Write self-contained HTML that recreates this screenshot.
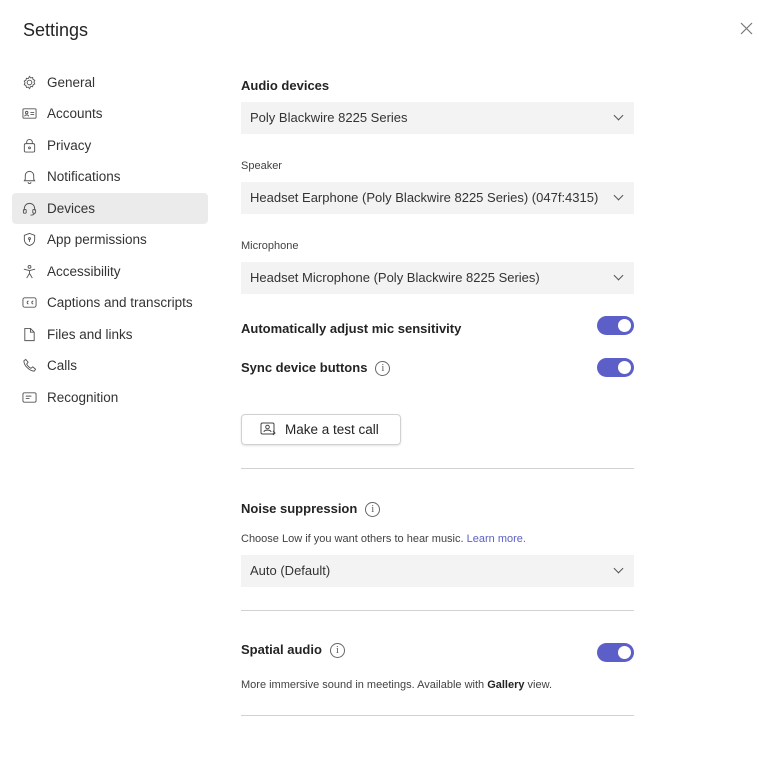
<!DOCTYPE html>
<html><head><style>
*{margin:0;padding:0;box-sizing:border-box}
body{width:759px;height:770px;background:#fff;font-family:"Liberation Sans",sans-serif;color:#242424;position:relative;overflow:hidden}
.a{position:absolute}
.nav{position:absolute;left:12px;width:196px;height:31px;font-size:13.5px;line-height:31px;padding-left:35px;color:#333}
.nav svg{position:absolute;left:10px;top:8px}
.sel{background:#ebebeb;border-radius:4px}
.h{position:absolute;left:241px;font-size:13px;font-weight:bold;color:#242424}
.lbl{position:absolute;left:241px;font-size:11px;color:#424242}
.dd{position:absolute;left:241px;width:393px;height:32px;background:#f3f3f3;font-size:13px;line-height:32px;padding-left:9px;color:#333}
.dd:after{content:"";position:absolute;right:12px;top:10px;width:6px;height:6px;border-right:1.3px solid #555;border-bottom:1.3px solid #555;transform:rotate(45deg)}
.tg{position:absolute;left:597px;width:37px;height:19px;border-radius:10px;background:#5b5fc7}
.tg:after{content:"";position:absolute;right:3px;top:3px;width:13px;height:13px;border-radius:50%;background:#fff}
.hr{position:absolute;left:241px;width:393px;height:1px;background:#d1d1d1}
.i{display:inline-block;width:15px;height:15px;border:1px solid #666;border-radius:50%;font-size:10px;line-height:13px;text-align:center;font-weight:normal;color:#555;vertical-align:middle;margin-left:8px;font-family:"Liberation Serif",serif}
</style></head><body>
<div class="a" style="left:23px;top:20px;font-size:18px;color:#242424">Settings</div>
<svg class="a" style="left:740px;top:22px" width="13" height="13" viewBox="0 0 13 13" stroke="#777" stroke-width="1.2"><path d="M1 1l11 11M12 1L1 12"/></svg>

<div class="nav" style="top:67px"><svg width="15" height="15" viewBox="0 0 16 16" fill="none" stroke="#555"><circle cx="8" cy="8" r="2.5"/><path d="M8 1.5l1.3 1.6 2-.4.5 2 1.8 1-.8 1.9.8 1.9-1.8 1-.5 2-2-.4L8 14.5l-1.3-1.6-2 .4-.5-2-1.8-1 .8-1.9-.8-1.9 1.8-1 .5-2 2 .4z"/></svg>General</div>
<div class="nav" style="top:98px"><svg width="15" height="15" viewBox="0 0 16 16" fill="none" stroke="#555"><rect x="1" y="3" width="14" height="10" rx="1"/><circle cx="5" cy="7" r="1.3"/><path d="M3 11c0-2 4-2 4 0M9 7h4M9 9h4"/></svg>Accounts</div>
<div class="nav" style="top:130px"><svg width="15" height="15" viewBox="0 0 16 16" fill="none" stroke="#555"><rect x="2.5" y="6" width="11" height="9" rx="1.5"/><path d="M5 6V4.5a3 3 0 016 0V6"/><circle cx="8" cy="10.5" r="1"/></svg>Privacy</div>
<div class="nav" style="top:161px"><svg width="15" height="15" viewBox="0 0 16 16" fill="none" stroke="#555"><path d="M3.5 11V7a4.5 4.5 0 019 0v4l1 1.5h-11zM6.5 14a1.5 1.5 0 003 0"/></svg>Notifications</div>
<div class="nav sel" style="top:193px"><svg width="15" height="15" viewBox="0 0 16 16" fill="none" stroke="#555"><path d="M2.5 10V8a5.5 5.5 0 0111 0v2"/><rect x="1.5" y="9" width="3" height="4" rx="1"/><rect x="11.5" y="9" width="3" height="4" rx="1"/><path d="M13 13c0 1.5-2 2-4 2"/></svg>Devices</div>
<div class="nav" style="top:224px"><svg width="15" height="15" viewBox="0 0 16 16" fill="none" stroke="#555"><path d="M8 1.5l5.5 2V8c0 3.5-2.5 5.5-5.5 6.5C5 13.5 2.5 11.5 2.5 8V3.5z"/><circle cx="8" cy="7" r="1"/><path d="M8 8v2.5"/></svg>App permissions</div>
<div class="nav" style="top:256px"><svg width="15" height="15" viewBox="0 0 16 16" fill="none" stroke="#555"><circle cx="8" cy="3" r="1.5"/><path d="M2 5.5l6 1.5 6-1.5M8 7v3l-3 5M8 10l3 5"/></svg>Accessibility</div>
<div class="nav" style="top:287px"><svg width="15" height="15" viewBox="0 0 16 16" fill="none" stroke="#555"><rect x="1" y="3" width="14" height="10" rx="2"/><path d="M7 6.5a1.5 1.5 0 100 3M12 6.5a1.5 1.5 0 100 3"/></svg>Captions and transcripts</div>
<div class="nav" style="top:319px"><svg width="15" height="15" viewBox="0 0 16 16" fill="none" stroke="#555"><path d="M3 1.5h6l4 4v9H3zM9 1.5v4h4"/></svg>Files and links</div>
<div class="nav" style="top:350px"><svg width="15" height="15" viewBox="0 0 16 16" fill="none" stroke="#555"><path d="M4 1.5l2.5 3-1.5 2c1 2 2.5 3.5 4.5 4.5l2-1.5 3 2.5-1.5 2c-5 0-11-6-11-11z"/></svg>Calls</div>
<div class="nav" style="top:382px"><svg width="15" height="15" viewBox="0 0 16 16" fill="none" stroke="#555"><rect x="1" y="3" width="14" height="10" rx="1.5"/><path d="M4 6.5h6M4 9h4"/></svg>Recognition</div>

<div class="h" style="top:78px">Audio devices</div>
<div class="dd" style="top:102px">Poly Blackwire 8225 Series</div>
<div class="lbl" style="top:160px">Speaker</div>
<div class="dd" style="top:182px">Headset Earphone (Poly Blackwire 8225 Series) (047f:4315)</div>
<div class="lbl" style="top:240px">Microphone</div>
<div class="dd" style="top:262px">Headset Microphone (Poly Blackwire 8225 Series)</div>
<div class="h" style="top:321px">Automatically adjust mic sensitivity</div>
<div class="tg" style="top:316px"></div>
<div class="h" style="top:360px">Sync device buttons<span class="i">i</span></div>
<div class="tg" style="top:358px"></div>
<div class="a" style="left:241px;top:414px;width:160px;height:31px;border:1px solid #d1d1d1;border-radius:4px;box-shadow:0 1px 2px rgba(0,0,0,.12);font-size:13.5px;line-height:29px;padding-left:43px;color:#242424">
<svg class="a" style="left:18px;top:7px" width="17" height="15" viewBox="0 0 17 15" fill="none" stroke="#444"><rect x="1" y="1" width="13" height="11" rx="1.5"/><circle cx="7.5" cy="5" r="1.8"/><path d="M4 10c0-2.5 7-2.5 7 0M13 9l2 2-2 2"/></svg>Make a test call</div>
<div class="hr" style="top:468px"></div>
<div class="h" style="top:501px">Noise suppression<span class="i">i</span></div>
<div class="lbl" style="top:533px">Choose Low if you want others to hear music. <span style="color:#5b5fc7">Learn more.</span></div>
<div class="dd" style="top:555px">Auto (Default)</div>
<div class="hr" style="top:610px"></div>
<div class="h" style="top:642px">Spatial audio<span class="i">i</span></div>
<div class="tg" style="top:643px"></div>
<div class="lbl" style="top:679px">More immersive sound in meetings. Available with <b style="color:#242424">Gallery</b> view.</div>
<div class="hr" style="top:715px"></div>
</body></html>
